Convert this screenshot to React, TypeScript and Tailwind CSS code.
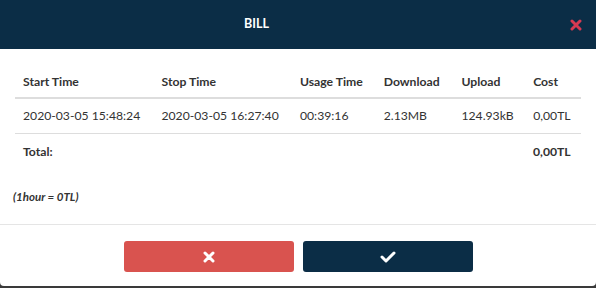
import React from "react";

const cols = [
  { w: "w-[139px]" },
  { w: "w-[139px]" },
  { w: "w-[84px]" },
  { w: "w-[78px]" },
  { w: "w-[72px]" },
  { w: "w-[56px]" },
];

const head = ["Start Time", "Stop Time", "Usage Time", "Download", "Upload", "Cost"];
const row = ["2020-03-05 15:48:24", "2020-03-05 16:27:40", "00:39:16", "2.13MB", "124.93kB", "0,00TL"];

export default function App() {
  return (
    <div className="w-[596px] h-[288px] bg-[#3a3a3a] overflow-hidden" style={{ fontFamily: "Lato, 'Open Sans', sans-serif" }}>
      <div className="h-[286px] bg-white rounded-b-[4px] flex flex-col overflow-hidden">
        <div className="h-[49px] bg-[#0b2d46] flex items-center shrink-0">
          <div className="flex-1 flex justify-center pr-[57px] text-white font-bold text-[12.5px]">BILL</div>
          <svg width="12" height="12" viewBox="0 0 12 12" className="mr-[14px]">
            <path d="M2 2 L10 10 M10 2 L2 10" stroke="#d63a52" strokeWidth="3" strokeLinecap="round" />
          </svg>
        </div>
        <div className="px-[15px] pt-[19px] text-[12.2px] text-[#333]">
          <div className="flex h-[31px] items-center border-b-2 border-[#ddd] font-bold">
            {head.map((h, i) => (
              <div key={i} className={`${cols[i].w} px-[8px] whitespace-nowrap`}>{h}</div>
            ))}
          </div>
          <div className="flex h-[35px] items-center border-b border-[#ddd]">
            {row.map((h, i) => (
              <div key={i} className={`${cols[i].w} px-[8px] whitespace-nowrap`}>{h}</div>
            ))}
          </div>
          <div className="flex h-[36px] items-center font-bold">
            <div className="flex-1 px-[8px]">Total:</div>
            <div className="w-[56px] px-[8px]">0,00TL</div>
          </div>
          <div className="h-[54px] flex items-center font-bold italic text-[11.5px] ml-[-2px]">(1hour = 0TL)</div>
        </div>
        <div className="border-t border-[#e5e5e5] flex justify-center gap-[9px] pt-[16px]">
          <button className="w-[170px] h-[31px] rounded-[3px] bg-[#d9534f] flex items-center justify-center">
            <svg width="12" height="12" viewBox="0 0 12 12">
              <path d="M2 2 L10 10 M10 2 L2 10" stroke="white" strokeWidth="3" strokeLinecap="round" />
            </svg>
          </button>
          <button className="w-[170px] h-[31px] rounded-[3px] bg-[#0b2d46] flex items-center justify-center">
            <svg width="16" height="12" viewBox="0 0 16 12">
              <path d="M2 6 L6 10 L14 2" stroke="white" strokeWidth="3" fill="none" strokeLinecap="round" strokeLinejoin="round" />
            </svg>
          </button>
        </div>
      </div>
    </div>
  );
}
